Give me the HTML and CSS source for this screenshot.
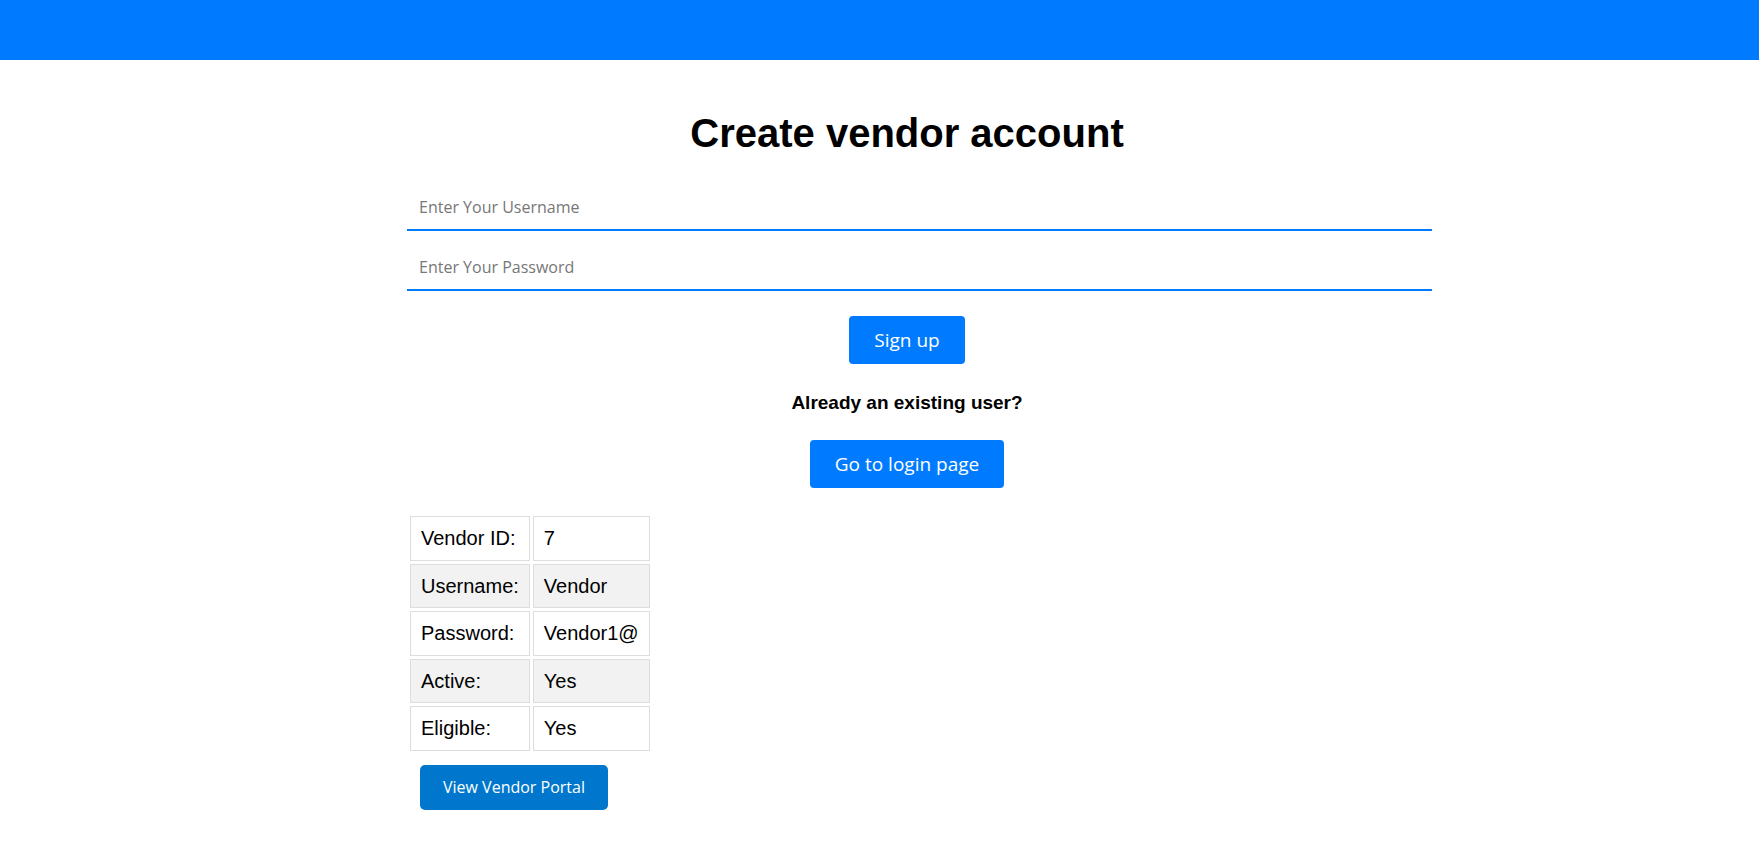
FILE: index.html
```html
<!DOCTYPE html>
<html lang="en">
<head>
<meta charset="utf-8">
<title>Create vendor account</title>
<link rel="stylesheet" href="styles.css">
</head>
<body>
<header class="topbar"></header>
<main class="main">
  <h1 class="title">Create vendor account</h1>
  <form class="form">
    <input class="field" type="text" placeholder="Enter Your Username">
    <input class="field" type="password" placeholder="Enter Your Password">
    <div class="center">
      <button type="button" class="btn">Sign up</button>
    </div>
    <p class="existing">Already an existing user?</p>
    <div class="center">
      <button type="button" class="btn">Go to login page</button>
    </div>
  </form>
  <table class="info">
    <tr><td>Vendor ID:</td><td>7</td></tr>
    <tr class="alt"><td>Username:</td><td>Vendor</td></tr>
    <tr><td>Password:</td><td>Vendor1@</td></tr>
    <tr class="alt"><td>Active:</td><td>Yes</td></tr>
    <tr><td>Eligible:</td><td>Yes</td></tr>
  </table>
  <button type="button" class="portal">View Vendor Portal</button>
</main>
</body>
</html>
```
FILE: styles.css
```css
html, body {
  margin: 0;
  padding: 0;
  background: #ffffff;
}
body {
  font-family: "Liberation Sans", Arial, sans-serif;
  color: #000;
}
.topbar {
  height: 60px;
  background: #007bff;
}
.main {
  width: 1000px;
  margin-left: calc(50% - 472.5px);
}
.title {
  margin: 50px 0 0 0;
  font-family: "Liberation Sans", Arial, sans-serif;
  font-weight: bold;
  font-size: 40px;
  line-height: 46px;
  text-align: center;
}
.form {
  display: flex;
  flex-direction: column;
  margin-top: 28px;
}
.field {
  box-sizing: border-box;
  width: 1025px;
  height: 47px;
  padding: 0 12px;
  border: none;
  border-bottom: 2px solid #007bff;
  font-family: "Open Sans", "Noto Sans", sans-serif;
  font-size: 16px;
  color: #333;
  outline: none;
  background: transparent;
}
.field + .field {
  margin-top: 13px;
}
.field::placeholder {
  color: #777;
}
.center {
  display: flex;
  justify-content: center;
}
.form .center:first-of-type {
  margin-top: 25px;
}
.btn {
  height: 48px;
  padding: 0 25px;
  border: none;
  border-radius: 4px;
  background: #007bff;
  color: #fff;
  font-family: "Open Sans", "Noto Sans", sans-serif;
  font-size: 19px;
  cursor: pointer;
}
.existing {
  margin: 28px 0 26px 0;
  text-align: center;
  font-weight: bold;
  font-size: 19px;
  line-height: 22px;
}
.info {
  margin-top: 25px;
  border-collapse: separate;
  border-spacing: 3px;
  font-family: "Liberation Sans", Arial, sans-serif;
  font-size: 20px;
}
.info td {
  border: 1px solid #dddddd;
  padding: 10px;
  line-height: 22.6px;
  white-space: nowrap;
}
.info tr.alt td {
  background: #f2f2f2;
}
.portal {
  display: block;
  margin: 11px 0 0 13px;
  width: 188px;
  height: 45px;
  border: none;
  border-radius: 5px;
  background: #0077cc;
  color: #fff;
  font-family: "Open Sans", "Noto Sans", sans-serif;
  font-size: 16px;
  cursor: pointer;
}
```
